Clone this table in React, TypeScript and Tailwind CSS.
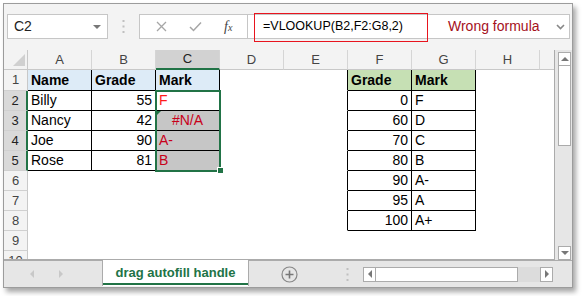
import React from 'react';

type Cell = {
  v?: string;
  align?: 'l' | 'r' | 'c';
  bold?: boolean;
  bg?: string;
  red?: boolean;
  r?: boolean;
  b?: boolean;
  tri?: boolean;
};

const COLS = ['A', 'B', 'C', 'D', 'E', 'F', 'G', 'H'];

const blue = 'bg-[#ddebf7]';
const green = 'bg-[#c6e0b4]';
const sel = 'bg-[#c6c6c6]';

const people: [string, string, string][] = [
  ['Billy', '55', 'F'],
  ['Nancy', '42', '#N/A'],
  ['Joe', '90', 'A-'],
  ['Rose', '81', 'B'],
];

const lookup: [string, string][] = [
  ['0', 'F'],
  ['60', 'D'],
  ['70', 'C'],
  ['80', 'B'],
  ['90', 'A-'],
  ['95', 'A'],
  ['100', 'A+'],
];

function buildRows(): Cell[][] {
  const rows: Cell[][] = [];
  rows.push([
    { v: 'Name', bold: true, bg: blue, r: true, b: true },
    { v: 'Grade', bold: true, bg: blue, r: true, b: true },
    { v: 'Mark', bold: true, bg: blue, r: true, b: true },
    {},
    { r: true },
    { v: 'Grade', bold: true, bg: green, r: true, b: true },
    { v: 'Mark', bold: true, bg: green, r: true, b: true },
    {},
  ]);
  for (let i = 0; i < 9; i++) {
    const p = people[i];
    const l = lookup[i];
    const row: Cell[] = [];
    if (p) {
      row.push({ v: p[0], r: true, b: true });
      row.push({ v: p[1], align: 'r', r: true, b: true });
      row.push({
        v: p[2],
        red: true,
        align: p[2] === '#N/A' ? 'c' : 'l',
        bg: i === 0 ? undefined : sel,
        tri: p[2] === '#N/A',
        r: true,
        b: true,
      });
    } else {
      row.push({}, {}, {});
    }
    row.push({});
    if (l) {
      row.push({ r: true });
      row.push({ v: l[0], align: 'r', r: true, b: true });
      row.push({ v: l[1], r: true, b: true });
    } else {
      row.push({}, {}, {});
    }
    row.push({});
    rows.push(row);
  }
  return rows;
}

function GridCell({ c, h }: { c: Cell; h: string }) {
  const align = c.align === 'r' ? 'justify-end pr-[3px]' : c.align === 'c' ? 'justify-center' : 'justify-start pl-[3px]';
  return (
    <div
      className={`relative flex items-center w-[64px] shrink-0 border-r border-b ${h} ${align} ${
        c.r ? 'border-r-black' : 'border-r-transparent'
      } ${c.b ? 'border-b-black' : 'border-b-transparent'} ${c.bg ?? 'bg-white'} ${c.bold ? 'font-bold' : ''} ${
        c.red ? (c.bg ? 'text-[#c8001a]' : 'text-[#ff1a1a]') : 'text-black'
      }`}
    >
      {c.tri && (
        <svg className="absolute left-0 top-0" width="5" height="5" viewBox="0 0 5 5">
          <polygon points="0,0 5,0 0,5" fill="#217346" />
        </svg>
      )}
      {c.v}
    </div>
  );
}

function SmallTri({ dir, color }: { dir: 'up' | 'down' | 'left' | 'right'; color: string }) {
  const pts = {
    up: '0,5 8,5 4,1',
    down: '0,1 8,1 4,5',
    left: '5,0 5,8 1,4',
    right: '1,0 1,8 5,4',
  }[dir];
  const w = dir === 'up' || dir === 'down' ? 8 : 6;
  const h = dir === 'up' || dir === 'down' ? 6 : 8;
  return (
    <svg width={w} height={h} viewBox={`0 0 ${w} ${h}`}>
      <polygon points={pts} fill={color} />
    </svg>
  );
}

function Dots() {
  return (
    <svg width="3" height="13" viewBox="0 0 3 13">
      <rect x="0.5" y="0" width="2" height="2" fill="#c0c0c0" />
      <rect x="0.5" y="5.5" width="2" height="2" fill="#c0c0c0" />
      <rect x="0.5" y="11" width="2" height="2" fill="#c0c0c0" />
    </svg>
  );
}

export default function App() {
  const rows = buildRows();
  const font = { fontFamily: '"Liberation Sans", Arial, sans-serif' };

  return (
    <div className="w-[582px] h-[296px] bg-white pt-[3px] pl-[3px]" style={font}>
      <div className="w-[570px] h-[285px] border border-[#9c9c9c] bg-[#f3f3f3] flex flex-col shadow-[3px_4px_5px_rgba(0,0,0,0.35)]">
        {/* formula bar */}
        <div className="h-[46px] shrink-0 flex items-start pt-[10px] pl-[3px]">
          <div className="w-[101px] h-[25px] bg-white border border-[#c6c6c6] flex items-center justify-between pl-[6px] pr-[6px] text-[14px] text-[#222]">
            <span>C2</span>
            <SmallTri dir="down" color="#777" />
          </div>
          <div className="w-[31px] h-[25px] flex items-center justify-center">
            <Dots />
          </div>
          <div className="w-[109px] h-[25px] bg-white border border-[#c6c6c6] flex items-center">
            <svg className="ml-[16px]" width="11" height="11" viewBox="0 0 11 11">
              <path d="M1 1 L10 10 M10 1 L1 10" stroke="#a6a6a6" strokeWidth="1.3" />
            </svg>
            <svg className="ml-[22px]" width="13" height="11" viewBox="0 0 13 11">
              <path d="M1 6 L4.5 9.5 L12 1.5" stroke="#a6a6a6" strokeWidth="1.5" fill="none" />
            </svg>
            <span
              className="ml-[22px] italic text-[#444] text-[14px] leading-none"
              style={{ fontFamily: '"Liberation Serif", "Times New Roman", serif' }}
            >
              f<span className="text-[10px]">x</span>
            </span>
          </div>
          <div className="relative flex-1 mr-[2px] -ml-[1px] h-[25px] bg-white border border-[#c6c6c6] flex items-center">
            <div className="absolute left-[6px] top-[-2px] w-[174px] h-[29px] border-[1.5px] border-[#e8141e]" />
            <span className="ml-[15px] w-[174px] shrink-0 text-[12.5px] text-black">=VLOOKUP(B2,F2:G8,2)</span>
            <span className="ml-[11px] text-[14px] text-[#a5101c]">Wrong formula</span>
            <svg className="ml-auto mr-[4px]" width="9" height="6" viewBox="0 0 9 6">
              <path d="M1 1 L4.5 4.5 L8 1" stroke="#888" strokeWidth="1.6" fill="none" />
            </svg>
          </div>
        </div>

        {/* sheet area */}
        <div className="h-[210px] shrink-0 flex">
          <div className="relative w-[551px] h-[210px] overflow-hidden bg-white border-r border-b border-[#ababab]">
            {/* column headers */}
            <div className="flex h-[20px] bg-[#f3f3f3] text-[13px] text-[#444]">
              <div className="w-[24px] shrink-0 border-r border-b border-[#c8c8c8] flex items-end justify-end pr-[2px] pb-[3px]">
                <svg width="12" height="12" viewBox="0 0 12 12">
                  <polygon points="12,0 12,12 0,12" fill="#d0d0d0" />
                </svg>
              </div>
              {COLS.map(c => (
                <div
                  key={c}
                  className={`w-[64px] shrink-0 border-r border-[#d5d5d5] flex items-center justify-center ${
                    c === 'C' ? 'bg-[#d2d2d2] border-b-2 border-b-[#217346] text-[#222]' : 'border-b border-b-[#c8c8c8]'
                  }`}
                >
                  {c}
                </div>
              ))}
              <div className="flex-1 border-b border-[#c8c8c8]" />
            </div>

            {/* rows */}
            {rows.map((row, i) => {
              const h = i === 0 ? 'h-[21px]' : 'h-[20px]';
              const picked = i >= 1 && i <= 4;
              return (
                <div key={i} className={`flex ${h} text-[14px]`}>
                  <div
                    className={`w-[24px] shrink-0 border-b border-[#d0d0d0] flex items-center justify-center text-[13px] ${
                      picked
                        ? 'bg-[#d9d9d9] border-r-2 border-r-[#217346] text-[#222]'
                        : 'bg-[#f3f3f3] border-r border-r-[#c8c8c8] text-[#444]'
                    }`}
                  >
                    {i + 1}
                  </div>
                  {row.map((c, j) => (
                    <GridCell key={j} c={c} h={h} />
                  ))}
                </div>
              );
            })}

            {/* selection frame and fill handle */}
            <div className="absolute left-[151px] top-[40px] w-[66px] h-[82px] border-2 border-[#217346]" />
            <div className="absolute left-[213px] top-[117px] w-[7px] h-[7px] bg-[#217346] border border-white" />
          </div>

          {/* vertical scrollbar */}
          <div className="w-[17px] h-[210px] bg-[#e6e6e6] flex flex-col items-start pl-[3px] pt-[2px]">
            <div className="w-[13px] h-[14px] bg-white border border-[#ababab] flex items-center justify-center">
              <SmallTri dir="up" color="#777" />
            </div>
            <div className="w-[13px] h-[81px] bg-white border border-[#ababab] -mt-[1px]" />
            <div className="mt-auto mb-[0px] w-[13px] h-[14px] bg-white border border-[#ababab] flex items-center justify-center">
              <SmallTri dir="down" color="#777" />
            </div>
          </div>
        </div>

        {/* sheet tabs */}
        <div className="h-[27px] shrink-0 flex">
          <div className="w-[98px] border-t border-[#ababab] bg-[#e6e6e6] flex items-center pl-[25px] gap-[23px]">
            <SmallTri dir="left" color="#c8c8c8" />
            <SmallTri dir="right" color="#c8c8c8" />
          </div>
          <div className="w-[147px] h-[26px] bg-white border-l border-r border-[#ababab] flex flex-col">
            <div className="flex-1 flex items-center justify-center pt-[2px] text-[13px] font-bold text-[#217346]">
              drag autofill handle
            </div>
            <div className="h-[2px] bg-[#217346] mb-[1px]" />
          </div>
          <div className="flex-1 border-t border-[#ababab] bg-[#e6e6e6] flex items-center">
            <svg className="ml-[32px]" width="17" height="17" viewBox="0 0 17 17">
              <circle cx="8.5" cy="8.5" r="7.5" stroke="#888" strokeWidth="1.2" fill="none" />
              <path d="M8.5 4.5 V12.5 M4.5 8.5 H12.5" stroke="#777" strokeWidth="1.6" />
            </svg>
            <div className="ml-[48px]">
              <Dots />
            </div>
            <div className="ml-[14px] flex items-center h-[15px]">
              <div className="w-[13px] h-[15px] bg-white border border-[#ababab] flex items-center justify-center">
                <SmallTri dir="left" color="#777" />
              </div>
              <div className="w-[143px] h-[15px] bg-white border border-[#ababab] -ml-[1px]" />
              <div className="w-[22px] h-[15px] bg-[#dcdcdc]" />
              <div className="w-[13px] h-[15px] bg-white border border-[#ababab] flex items-center justify-center">
                <SmallTri dir="right" color="#777" />
              </div>
            </div>
          </div>
        </div>
      </div>
    </div>
  );
}
